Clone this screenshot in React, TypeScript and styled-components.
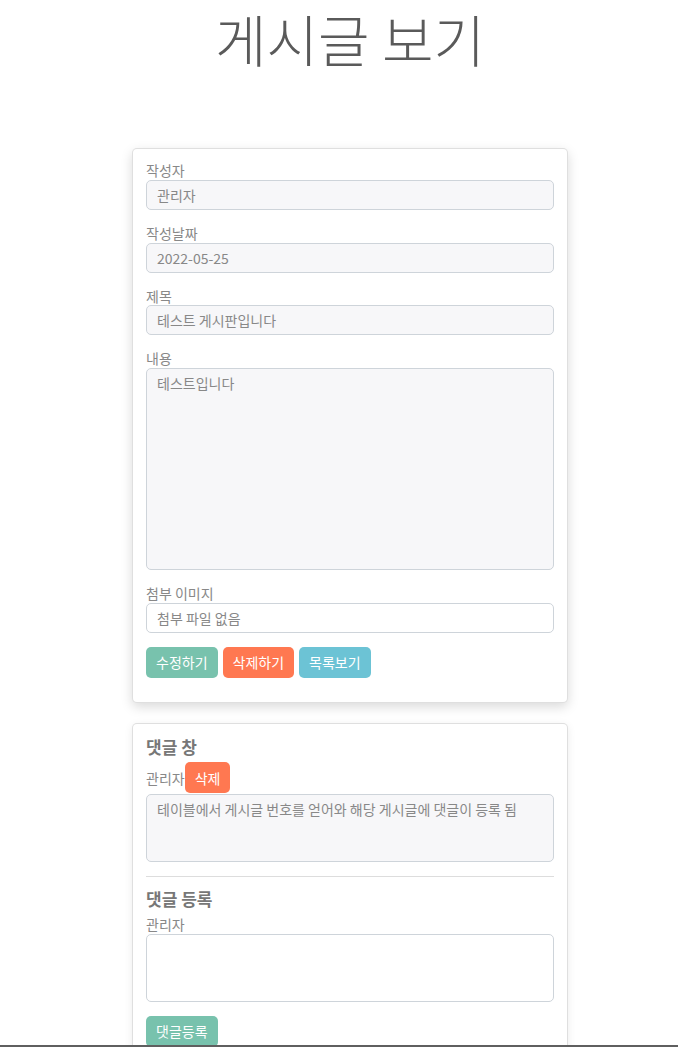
import React from 'react';
import styled, { createGlobalStyle } from 'styled-components';

const GlobalStyle = createGlobalStyle`
  html, body {
    margin: 0;
    padding: 0;
    background: #fff;
  }
  body {
    font-family: "Noto Sans CJK KR", "Noto Sans", sans-serif;
    color: #888;
  }
  * { box-sizing: border-box; }
`;

const Page = styled.div`
  display: flex;
  flex-direction: column;
  padding-left: 22px;
  padding-bottom: 40px;
`;

const Title = styled.h1`
  margin: 0;
  padding-top: 2px;
  text-align: center;
  font-family: "Noto Sans CJK KR", sans-serif;
  font-weight: 300;
  font-size: 56px;
  line-height: 72px;
  color: #5a5a5a;
`;

const Stack = styled.main`
  display: flex;
  flex-direction: column;
  align-items: center;
  gap: 20px;
  margin-top: 74px;
`;

const Card = styled.section<{ $shadow?: boolean }>`
  width: 436px;
  background: #fff;
  border: 1px solid rgba(0, 0, 0, 0.125);
  border-radius: 5px;
  padding: 12px 13px 24px;
  box-shadow: ${(p) => (p.$shadow ? '0 4px 12px rgba(0, 0, 0, 0.15)' : '0 2px 8px rgba(0, 0, 0, 0.08)')};
`;

const Field = styled.div<{ $gap?: number }>`
  display: flex;
  flex-direction: column;
  margin-bottom: ${(p) => p.$gap ?? 14}px;
`;

const Label = styled.label`
  font-size: 14px;
  line-height: 18.8px;
  color: #888;
`;

const Box = styled.div<{ $tall?: number; $plain?: boolean }>`
  width: 100%;
  height: ${(p) => p.$tall ?? 30}px;
  padding: 4px 10px;
  border: 1px solid #ced4da;
  border-radius: 5px;
  background: ${(p) => (p.$plain ? '#fff' : '#f7f7f9')};
  font-size: 14px;
  line-height: 20px;
  color: #888;
`;

const Buttons = styled.div`
  display: flex;
  gap: 5px;
`;

const Button = styled.button<{ $tone: string }>`
  height: 31px;
  padding: 0 10px;
  border: none;
  border-radius: 5px;
  background: ${(p) => p.$tone};
  color: #fff;
  font-family: "Noto Sans CJK KR", sans-serif;
  font-size: 14px;
  cursor: pointer;
`;

const Heading = styled.h5<{ $top?: number }>`
  margin: ${(p) => p.$top ?? 0}px 0 5px;
  font-family: "Noto Sans CJK KR", sans-serif;
  font-size: 17px;
  line-height: 22px;
  font-weight: 700;
  color: #777;
`;

const CommentHead = styled.div`
  display: flex;
  align-items: center;
  height: 30px;
  margin-bottom: 1px;
`;

const Author = styled.span`
  font-size: 14px;
  color: #888;
`;

const Divider = styled.hr`
  margin: 14px 0 0;
  border: none;
  border-top: 1px solid #ddd;
`;

const BottomEdge = styled.div`
  position: fixed;
  left: 0;
  right: 0;
  bottom: 0;
  height: 2px;
  background: #5f5f5f;
`;

const GREEN = '#78c2ad';
const ORANGE = '#ff7851';
const BLUE = '#6cc3d5';

export default function App() {
  return (
    <>
      <GlobalStyle />
      <Page>
        <Title>게시글 보기</Title>
        <Stack>
          <Card $shadow>
            <Field>
              <Label>작성자</Label>
              <Box>관리자</Box>
            </Field>
            <Field>
              <Label>작성날짜</Label>
              <Box>2022-05-25</Box>
            </Field>
            <Field>
              <Label>제목</Label>
              <Box>테스트 게시판입니다</Box>
            </Field>
            <Field>
              <Label>내용</Label>
              <Box $tall={202}>테스트입니다</Box>
            </Field>
            <Field>
              <Label>첨부 이미지</Label>
              <Box $plain>첨부 파일 없음</Box>
            </Field>
            <Buttons>
              <Button $tone={GREEN}>수정하기</Button>
              <Button $tone={ORANGE}>삭제하기</Button>
              <Button $tone={BLUE}>목록보기</Button>
            </Buttons>
          </Card>
          <Card>
            <Heading>댓글 창</Heading>
            <CommentHead>
              <Author>관리자</Author>
              <Button $tone={ORANGE}>삭제</Button>
            </CommentHead>
            <Box $tall={68}>테이블에서 게시글 번호를 얻어와 해당 게시글에 댓글이 등록 됨</Box>
            <Divider />
            <Heading $top={11}>댓글 등록</Heading>
            <Field>
              <Label>관리자</Label>
              <Box $tall={68} $plain />
            </Field>
            <Buttons>
              <Button $tone={GREEN}>댓글등록</Button>
            </Buttons>
          </Card>
        </Stack>
      </Page>
      <BottomEdge />
    </>
  );
}
